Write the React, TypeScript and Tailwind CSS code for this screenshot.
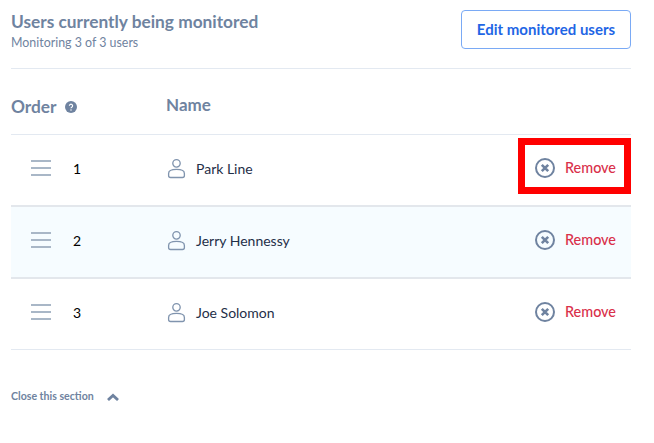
const users = [
  { order: 1, name: 'Park Line' },
  { order: 2, name: 'Jerry Hennessy' },
  { order: 3, name: 'Joe Solomon' },
]

function HelpIcon() {
  return (
    <svg width="12" height="12" viewBox="0 0 12 12">
      <circle cx="6" cy="6" r="6" fill="#6f83a0" />
      <path d="M4.4 4.8a1.6 1.6 0 1 1 2.4 1.4c-.5.3-.8.5-.8 1.1" fill="none" stroke="#fff" strokeWidth="1.2" />
      <circle cx="6" cy="9" r=".75" fill="#fff" />
    </svg>
  )
}

function DragHandle() {
  return (
    <div className="flex w-[20px] flex-col gap-[5px]">
      <div className="h-[2px] bg-[#a9b7c7]" />
      <div className="h-[2px] bg-[#a9b7c7]" />
      <div className="h-[2px] bg-[#a9b7c7]" />
    </div>
  )
}

function UserIcon() {
  return (
    <svg width="19" height="21" viewBox="0 0 20 22" fill="none" stroke="#8094ae" strokeWidth="1.4">
      <circle cx="10" cy="5.6" r="3.9" />
      <path d="M1.7 16.2c0-3 2.6-4.2 8.3-4.2s8.3 1.2 8.3 4.2v2.4c0 1.3-.8 1.9-2 1.9H3.7c-1.2 0-2-.6-2-1.9z" />
    </svg>
  )
}

function RemoveIcon() {
  return (
    <svg width="20" height="20" viewBox="0 0 20 20" fill="none" stroke="#6f83a0">
      <circle cx="10" cy="10" r="9" strokeWidth="2" />
      <path d="M6.8 6.8l6.4 6.4M13.2 6.8l-6.4 6.4" strokeWidth="2.6" />
    </svg>
  )
}

function ChevronIcon() {
  return (
    <svg width="12" height="8" viewBox="0 0 12 8" fill="none" stroke="#6f83a0" strokeWidth="2.8">
      <path d="M1 7l5-4.6L11 7" />
    </svg>
  )
}

export default function App() {
  return (
    <div className="relative h-[443px] w-[654px] overflow-hidden bg-white pl-[11px] pr-[23px] font-['Lato',sans-serif]">
      <div className="flex h-[69px] items-start justify-between border-b border-[#e3e9f1] pt-[10px]">
        <div className="pt-[1px]">
          <div className="text-[17.3px] font-bold leading-[21px] text-[#6f83a0]">Users currently being monitored</div>
          <div className="mt-[2px] text-[12.4px] leading-[17px] text-[#6f83a0]">Monitoring 3 of 3 users</div>
        </div>
        <button className="h-[39px] w-[170px] rounded-[4px] border border-[#7aaaf5] text-[15px] font-bold text-[#1f66e5]">
          Edit monitored users
        </button>
      </div>

      <div className="flex h-[66px] border-b border-[#e3e9f1]">
        <div className="flex w-[155px] items-center gap-[8px] pt-[11px]">
          <span className="text-[17.3px] font-bold text-[#6f83a0]">Order</span>
          <HelpIcon />
        </div>
        <div className="pt-[25px] text-[17px] font-bold leading-[21px] text-[#6f83a0]">Name</div>
      </div>

      {users.map((user, i) => (
        <div
          key={user.order}
          className={`flex items-center pb-[4px] ${i === 1 ? 'bg-[#f6fcff]' : 'bg-white'} ${i === 2 ? 'h-[71px] border-b border-[#e3e9f1]' : 'h-[72px] border-b-2 border-[#e3e7ec]'}`}
        >
          <div className="ml-[20px]">
            <DragHandle />
          </div>
          <div className="ml-[22px] w-[94px] text-[14px] text-black">{user.order}</div>
          <UserIcon />
          <div className="ml-[10px] text-[14px] text-[#1f2f48]">{user.name}</div>
          <div className="ml-auto mr-[15px] flex items-center gap-[10px]">
            <RemoveIcon />
            <span className="text-[14.4px] font-medium text-[#d9304a]">Remove</span>
          </div>
        </div>
      ))}

      <div className="mt-[39px] flex items-center gap-[13px]">
        <span className="text-[10.6px] font-bold text-[#6f83a0]">Close this section</span>
        <ChevronIcon />
      </div>

      <div className="absolute left-[518px] top-[138px] h-[56px] w-[113px] border-[7px] border-[#ff0000]" />
    </div>
  )
}
